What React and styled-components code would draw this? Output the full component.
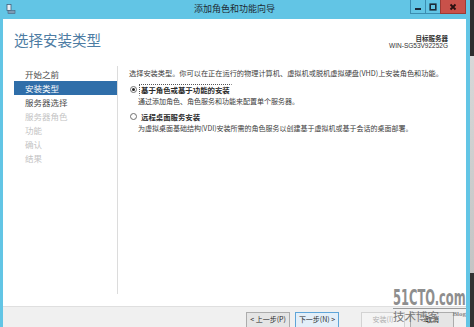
import styled, { createGlobalStyle } from "styled-components";

const GlobalStyle = createGlobalStyle`
  html, body {
    margin: 0;
    padding: 0;
    background: #3a3a3a;
    overflow: hidden;
  }
  body {
    font-family: "Noto Sans CJK SC", "Noto Sans", sans-serif;
  }
`;

const steps = [
  { label: "开始之前", state: "done" },
  { label: "安装类型", state: "active" },
  { label: "服务器选择", state: "done" },
  { label: "服务器角色", state: "off" },
  { label: "功能", state: "off" },
  { label: "确认", state: "off" },
  { label: "结果", state: "off" },
];

export default function App() {
  return (
    <>
      <GlobalStyle />
      <Screen>
        <Window>
          <TitleBar>
            <AppIcon viewBox="0 0 10 10">
              <rect x="1" y="0.5" width="4" height="6" fill="#e8eef4" stroke="#44627e" strokeWidth="0.8" />
              <rect x="2" y="6.5" width="7" height="3" fill="#7f9bb4" stroke="#44627e" strokeWidth="0.6" />
            </AppIcon>
            <Title>添加角色和功能向导</Title>
            <Controls>
              <CtlButton>
                <svg width="8" height="8" viewBox="0 0 8 8">
                  <rect x="1" y="5" width="6" height="2" fill="#1b2a38" />
                </svg>
              </CtlButton>
              <CtlButton>
                <svg width="8" height="8" viewBox="0 0 8 8">
                  <rect x="1.2" y="1.2" width="5.6" height="5.6" fill="none" stroke="#1b2a38" strokeWidth="1.6" />
                </svg>
              </CtlButton>
              <CloseButton>
                <svg width="8" height="8" viewBox="0 0 8 8">
                  <path d="M1.5 1.5 L6.5 6.5 M6.5 1.5 L1.5 6.5" stroke="#2a1010" strokeWidth="1.8" />
                </svg>
              </CloseButton>
            </Controls>
          </TitleBar>

          <Body>
            <Header>
              <PageTitle>选择安装类型</PageTitle>
              <Target>
                <strong>目标服务器</strong>
                <span>WIN-SG53V92252G</span>
              </Target>
            </Header>

            <Main>
              <Nav>
                {steps.map((s) => (
                  <NavItem key={s.label} $state={s.state}>
                    {s.label}
                  </NavItem>
                ))}
              </Nav>

              <Content>
                <Intro>
                  选择安装类型。你可以在正在运行的物理计算机、虚拟机或脱机虚拟硬盘(VHD)上安装角色和功能。
                </Intro>

                <Option>
                  <OptionHead>
                    <Radio $checked />
                    <OptionLabel $focused>基于角色或基于功能的安装</OptionLabel>
                  </OptionHead>
                  <OptionDesc>通过添加角色、角色服务和功能来配置单个服务器。</OptionDesc>
                </Option>

                <Option>
                  <OptionHead>
                    <Radio />
                    <OptionLabel>远程桌面服务安装</OptionLabel>
                  </OptionHead>
                  <OptionDesc>
                    为虚拟桌面基础结构(VDI)安装所需的角色服务以创建基于虚拟机或基于会话的桌面部署。
                  </OptionDesc>
                </Option>
              </Content>
            </Main>

            <Footer>
              <Button>&lt; 上一步(P)</Button>
              <Button $primary>下一步(N) &gt;</Button>
              <Spacer />
              <Button $disabled>安装(I)</Button>
              <Button>取消</Button>
            </Footer>

            <Watermark>
              <Brand>51CTO.com</Brand>
              <BrandSub>
                <span>技术博客</span>
                <small>Blog</small>
              </BrandSub>
            </Watermark>
          </Body>
        </Window>
        <Desktop>
          <DesktopTop />
          <DesktopRest />
        </Desktop>
      </Screen>
    </>
  );
}

const Screen = styled.div`
  width: 474px;
  height: 327px;
  display: flex;
  overflow: hidden;
`;

const Window = styled.div`
  width: 470px;
  height: 327px;
  background: #62c5e5;
  padding: 0 4px 0 3px;
  box-sizing: border-box;
  display: flex;
  flex-direction: column;
`;

const TitleBar = styled.div`
  height: 19px;
  flex: none;
  display: flex;
  align-items: flex-start;
  position: relative;
`;

const AppIcon = styled.svg`
  width: 10px;
  height: 10px;
  margin: 4px 0 0 3px;
`;

const Title = styled.div`
  position: absolute;
  left: 0;
  right: 0;
  top: 3px;
  text-align: center;
  font-size: 9px;
  line-height: 12px;
  color: #1f2a33;
`;

const Controls = styled.div`
  margin-left: auto;
  display: flex;
  height: 14px;
`;

const CtlButton = styled.div`
  width: 16px;
  height: 14px;
  box-sizing: border-box;
  border: 1px solid #3a8db0;
  border-top: none;
  margin-left: -1px;
  display: flex;
  align-items: center;
  justify-content: center;
`;

const CloseButton = styled(CtlButton)`
  width: 26px;
  background: #c9514a;
  border-color: #9c3b35;
`;

const Body = styled.div`
  flex: 1;
  background: #fff;
  display: flex;
  flex-direction: column;
  position: relative;
  min-height: 0;
  overflow: hidden;
`;

const Header = styled.div`
  height: 47px;
  flex: none;
  display: flex;
  justify-content: space-between;
  align-items: flex-start;
  padding: 12px 18px 0 11px;
  box-sizing: border-box;
`;

const PageTitle = styled.h1`
  margin: 0;
  font-size: 14.5px;
  line-height: 18px;
  font-weight: 400;
  color: #4d7ca3;
`;

const Target = styled.div`
  display: flex;
  flex-direction: column;
  align-items: flex-end;
  margin-top: 3px;
  font-size: 6.5px;
  line-height: 8px;
  color: #333;
  font-family: "Liberation Sans", "Noto Sans CJK SC", sans-serif;

  strong {
    font-weight: 700;
    font-family: "Noto Sans CJK SC", sans-serif;
  }
`;

const Main = styled.div`
  flex: 1;
  display: flex;
  padding-bottom: 12px;
  min-height: 0;
`;

const Nav = styled.div`
  width: 103px;
  flex: none;
  padding: 1px 0 0 11px;
  border-right: 1px solid #dcdcdc;
  display: flex;
  flex-direction: column;
`;

const NavItem = styled.div`
  height: 14px;
  line-height: 14px;
  padding-left: 11px;
  font-size: 8.5px;
  color: ${(p) => (p.$state === "off" ? "#c4c4c4" : p.$state === "active" ? "#fff" : "#4a4a4a")};
  background: ${(p) => (p.$state === "active" ? "#2f6ea9" : "transparent")};
`;

const Content = styled.div`
  flex: 1;
  padding: 1px 0 0 11px;
  display: flex;
  flex-direction: column;
`;

const Intro = styled.div`
  font-size: 7.2px;
  line-height: 12px;
  color: #3b3b3b;
  white-space: nowrap;
  margin-bottom: 4px;
`;

const Option = styled.div`
  display: flex;
  flex-direction: column;
  margin-bottom: 3px;
`;

const OptionHead = styled.div`
  display: flex;
  align-items: center;
  height: 13px;
  gap: 2px;
`;

const Radio = styled.span`
  width: 7px;
  height: 7px;
  margin-left: 1px;
  box-sizing: border-box;
  border-radius: 50%;
  border: 1px solid #707070;
  background: #fff;
  display: inline-flex;
  align-items: center;
  justify-content: center;

  &::after {
    content: "";
    width: 3px;
    height: 3px;
    border-radius: 50%;
    background: ${(p) => (p.$checked ? "#222" : "transparent")};
  }
`;

const OptionLabel = styled.span`
  font-size: 7.4px;
  line-height: 10px;
  font-weight: 700;
  color: #2b2b2b;
  padding: 0 1px;
  border: 1px dotted ${(p) => (p.$focused ? "#555" : "transparent")};
  border-right-color: transparent;
  border-bottom-color: transparent;
`;

const OptionDesc = styled.div`
  font-size: 7px;
  line-height: 11px;
  color: #3b3b3b;
  padding-left: 9px;
  white-space: nowrap;
`;

const Footer = styled.div`
  height: 21px;
  flex: none;
  background: #f0f0f0;
  border-top: 1px solid #dfdfdf;
  display: flex;
  align-items: flex-start;
  gap: 5px;
  padding: 5px 12px 0 243px;
  box-sizing: border-box;
  overflow: hidden;
`;

const Spacer = styled.div`
  width: 15px;
`;

const Button = styled.div`
  width: 44px;
  height: 18px;
  flex: none;
  box-sizing: border-box;
  border: 1px solid ${(p) => (p.$primary ? "#5fa5d8" : p.$disabled ? "#d3d3d3" : "#acacac")};
  background: ${(p) => (p.$primary ? "#e3eff9" : p.$disabled ? "#f4f4f4" : "#e5e5e5")};
  color: ${(p) => (p.$disabled ? "#b0b0b0" : "#2a2a2a")};
  font-size: 7px;
  line-height: 13px;
  text-align: center;
  white-space: nowrap;
`;

const Watermark = styled.div`
  position: absolute;
  right: 0;
  bottom: 4px;
  width: 73px;
  display: flex;
  flex-direction: column;
  pointer-events: none;
`;

const Brand = styled.div`
  height: 21px;
  border-bottom: 1px solid #9a9a9a;
  overflow: visible;
  font-family: "DejaVu Sans Condensed", "DejaVu Sans", sans-serif;
  font-weight: 700;
  font-size: 22px;
  line-height: 21px;
  color: #8e8e8e;
  white-space: nowrap;
  transform: scaleX(0.58);
  transform-origin: left center;
  width: 126px;
  text-shadow: 0 0 1px #fff;
`;

const BrandSub = styled.div`
  display: flex;
  align-items: flex-start;
  justify-content: space-between;

  span {
    font-family: "Noto Sans CJK SC", serif;
    font-size: 11.5px;
    line-height: 14px;
    color: #7a7a7a;
  }

  small {
    font-family: "Liberation Serif", serif;
    font-weight: 700;
    font-size: 7px;
    line-height: 10px;
    color: #8a8a8a;
  }
`;

const Desktop = styled.div`
  width: 4px;
  display: flex;
  flex-direction: column;
`;

const DesktopTop = styled.div`
  height: 56px;
  background: #2e2e2e;
`;

const DesktopRest = styled.div`
  flex: 1;
  background: linear-gradient(#d8d8d8, #c4c4c4 80%, #333 80%);
`;
